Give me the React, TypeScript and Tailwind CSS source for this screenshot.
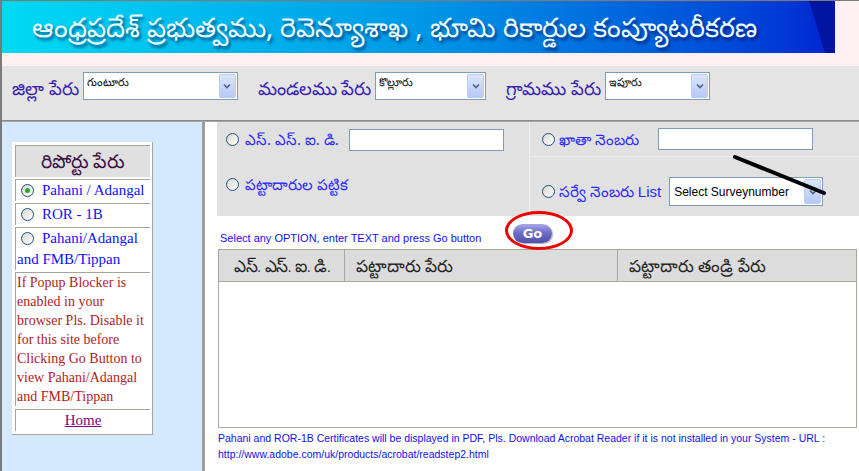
import React from "react";

const tel = "font-['Noto_Sans','DejaVu_Sans',sans-serif]";
const tahoma = "font-['Liberation_Sans',Arial,sans-serif]";
const serif = "font-['Liberation_Serif','Times_New_Roman',serif]";

function Radio({ checked = false }: { checked?: boolean }) {
  return (
    <span className="inline-flex h-[13px] w-[13px] shrink-0 items-center justify-center rounded-full border border-[#1c5180] bg-gradient-to-br from-[#d8d8d2] to-white">
      {checked && <span className="h-[5px] w-[5px] rounded-full bg-[#2aa82a]" />}
    </span>
  );
}

function DropButton({ h }: { h: string }) {
  return (
    <span className={`m-[1px] flex w-[17px] ${h} items-center justify-center rounded-[2px] border border-[#b9cdf8] bg-gradient-to-b from-[#dbe5fd] to-[#b6c9f5]`}>
      <svg width="8" height="6" viewBox="0 0 8 6">
        <path d="M1 1.5 L4 4.5 L7 1.5" fill="none" stroke="#4d6185" strokeWidth="1.6" />
      </svg>
    </span>
  );
}

function FakeSelect({ value, w }: { value: string; w: string }) {
  return (
    <div className={`flex h-[28px] ${w} items-stretch justify-between border border-[#7f9db9] bg-white`}>
      <span className={`${tel} pl-[3px] pt-[2px] text-[11px] leading-[14px] text-black`}>{value}</span>
      <DropButton h="h-[24px]" />
    </div>
  );
}

function Field({ label, value, w }: { label: string; value: string; w: string }) {
  return (
    <div className="flex items-center gap-[4px]">
      <span className={`${tel} pt-[6px] text-[18px] font-light text-[#3421b0]`}>{label}</span>
      <FakeSelect value={value} w={w} />
    </div>
  );
}

export default function App() {
  return (
    <div className="relative h-[471px] w-[859px] overflow-hidden border-t border-l-2 border-[#7a7a7a] bg-[#fff0f3]">
      {/* banner */}
      <div className="relative h-[52px] w-[833px] overflow-hidden bg-gradient-to-r from-[#00daf4] via-[#0098e6] to-[#0022d2]">
        <div className="absolute right-0 top-0 h-full w-[40px] bg-[#0016a0] [clip-path:polygon(35%_0,100%_0,100%_100%,75%_100%)]" />
        <div className={`${tel} relative flex h-full items-center pl-[30px] text-[27px] text-[#eafcff] [text-shadow:2px_3px_3px_rgba(0,0,60,0.55)]`}>
          ఆంధ్రప్రదేశ్ ప్రభుత్వము, రెవెన్యూశాఖ , భూమి రికార్డుల కంప్యూటరీకరణ
        </div>
      </div>
      <div className="h-[13px]" />

      {/* selectors */}
      <div className="flex h-[54px] items-start gap-[20px] bg-[#e4e4e4] pl-[10px] pt-[3px]">
        <Field label="జిల్లా పేరు" value="గుంటూరు" w="w-[155px]" />
        <Field label="మండలము పేరు" value="కొల్లూరు" w="w-[111px]" />
        <Field label="గ్రామము పేరు" value="ఇపూరు" w="w-[105px]" />
      </div>
      <div className="h-[2px] border-t border-[#8a8a8a] bg-[#a8a8a8]" />

      <div className="flex h-[349px]">
        {/* left panel */}
        <aside className="w-[203px] shrink-0 border-r-[3px] border-[#a19d95] bg-[#d5e9fd] pl-[10px] pt-[20px]">
          <div className="w-[141px] border-r border-b border-[#a8a49c] bg-white p-[3px] pr-[2px]">
            <div className={`${tel} flex h-[32px] items-center justify-center border-t border-l border-[#a8a49c] bg-[#e0e0e0] text-[19px] font-light text-[#3a1040]`}>
              రిపోర్టు పేరు
            </div>
            <div className={`${serif} text-[15px] leading-[19px] text-[#1010ff]`}>
              <div className="mt-[2px] flex items-center gap-[8px] border-t border-l border-[#a8a49c] py-[1px] pl-[5px]">
                <Radio checked /> Pahani / Adangal
              </div>
              <div className="mt-[2px] flex items-center gap-[8px] border-t border-l border-[#a8a49c] py-[1px] pl-[5px]">
                <Radio /> ROR - 1B
              </div>
              <div className="mt-[2px] border-t border-l border-[#a8a49c] py-[1px] pl-[1px]">
                <span className="inline-flex items-center gap-[8px] pl-[4px]">
                  <Radio /> Pahani/Adangal
                </span>
                <br />
                and FMB/Tippan
              </div>
              <div className="mt-[2px] border-t border-l border-[#a8a49c] pl-[1px] text-[14px] leading-[19px] text-[#b01c1c]">
                If Popup Blocker is enabled in your browser Pls. Disable it for this site before Clicking Go Button to view Pahani/Adangal and FMB/Tippan
              </div>
              <div className="mt-[3px] border-t border-l border-[#a8a49c] py-[1px] text-center text-[15px] leading-[19px]">
                <a href="#" className="text-[#800080] underline">Home</a>
              </div>
            </div>
          </div>
        </aside>

        {/* right content */}
        <main className="flex-1 bg-white pl-[12px]">
          <div className={`${tel} grid h-[94px] grid-cols-[312px_1fr] bg-[#e1e1e1] text-[15px] text-[#2a2aff]`}>
            <div className="flex flex-col">
              <div className="flex h-[35px] items-center gap-[6px] pl-[9px]">
                <Radio />
                <span className="w-[98px]">ఎస్. ఎస్. ఐ. డి.</span>
                <span className="h-[22px] w-[155px] border border-[#7f9db9] bg-white" />
              </div>
              <div className="flex h-[54px] items-center gap-[6px] pl-[9px]">
                <Radio />
                <span>పట్టాదారుల పట్టిక</span>
              </div>
            </div>
            <div className="flex flex-col border-l border-[#f0f0f0]">
              <div className="flex h-[35px] items-center gap-[4px] border-b border-[#ededed] pl-[12px]">
                <Radio />
                <span className="w-[95px]">ఖాతా నెంబరు</span>
                <span className="h-[22px] w-[155px] border border-[#7f9db9] bg-white" />
              </div>
              <div className="flex flex-1 items-center gap-[4px] pl-[12px] pt-[10px]">
                <Radio />
                <span>సర్వే నెంబరు <span className={`${tahoma}`}>List</span></span>
                <div className="ml-[4px] flex h-[29px] w-[154px] items-stretch justify-between border border-[#7f9db9] bg-white">
                  <span className={`${tahoma} flex items-center pl-[4px] text-[12px] text-black`}>Select Surveynumber</span>
                  <DropButton h="h-[25px]" />
                </div>
              </div>
            </div>
          </div>

          {/* go row */}
          <div className="relative flex h-[33px] items-end pb-[3px] pl-[3px]">
            <span className={`${tahoma} text-[11px] text-[#1010ee]`}>
              Select any OPTION, enter TEXT and press Go button
            </span>
            <button className="absolute left-[296px] top-[8px] flex h-[19px] w-[39px] items-center justify-center rounded-full bg-gradient-to-b from-[#a8a8e8] via-[#6a6ac4] to-[#5050a8] text-[13px] font-bold text-white shadow-[1px_1px_1px_rgba(0,0,0,0.3)]">
              <span className="font-['DejaVu_Sans',sans-serif]">Go</span>
            </button>
            <span className="pointer-events-none absolute left-[288px] top-[-5px] h-[39px] w-[68px] rounded-[50%] border-[3px] border-[#ee0000]" />
          </div>

          {/* results table */}
          <div className="ml-[1px] mr-[2px] h-[179px] border border-[#aca899] bg-white">
            <div className={`${tel} grid h-[32px] grid-cols-[126px_273px_1fr] bg-[#dcdcdc] text-[17px] font-light text-[#222]`}>
              <div className="flex items-center border-r border-b border-[#aca899] pl-[15px] tracking-[-0.5px]">ఎస్. ఎస్. ఐ. డి.</div>
              <div className="flex items-center border-r border-b border-[#aca899] pl-[11px]">పట్టాదారు పేరు</div>
              <div className="flex items-center border-b border-[#aca899] pl-[11px]">పట్టాదారు తండ్రి పేరు</div>
            </div>
          </div>

          <div className={`${tahoma} pl-[1px] pt-[2px] text-[10.5px] leading-[16px] text-[#1010ee]`}>
            Pahani and ROR-1B Certificates will be displayed in PDF, Pls. Download Acrobat Reader if it is not installed in your System - URL :
            <br />
            http://www.adobe.com/uk/products/acrobat/readstep2.html
          </div>
        </main>
      </div>

      {/* annotation stroke */}
      <svg className="pointer-events-none absolute left-[728px] top-[150px]" width="100" height="48" viewBox="0 0 100 48">
        <path d="M5 6 L94 42" stroke="#000" strokeWidth="4" strokeLinecap="round" />
      </svg>
    </div>
  );
}
